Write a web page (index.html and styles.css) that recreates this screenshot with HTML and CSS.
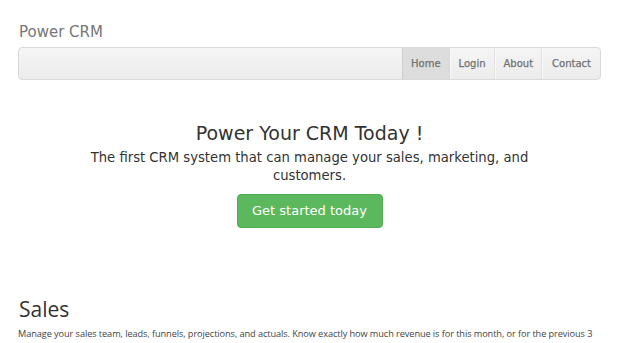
FILE: index.html
```html
<!DOCTYPE html>
<html>
<head>
<meta charset="utf-8">
<link rel="stylesheet" href="styles.css">
</head>
<body>
<div class="container">
  <header class="masthead">
    <div class="brand">Power CRM</div>
    <nav class="navbar">
      <ul class="nav">
        <li class="active"><a href="#">Home</a></li>
        <li><a href="#">Login</a></li>
        <li><a href="#">About</a></li>
        <li><a href="#">Contact</a></li>
      </ul>
    </nav>
  </header>
  <section class="hero">
    <h1>Power Your CRM Today !</h1>
    <p class="lead">The first CRM system that can manage your sales, marketing, and customers.</p>
    <a class="btn" href="#">Get started today</a>
  </section>
  <section class="feature">
    <h2>Sales</h2>
    <p>Manage your sales team, leads, funnels, projections, and actuals. Know exactly how much revenue is for this month, or for the previous 3 years.</p>
  </section>
</div>
</body>
</html>
```
FILE: styles.css
```css
* { box-sizing: border-box; }
html, body { margin: 0; padding: 0; background: #fff; }
body { font-family: "DejaVu Sans", sans-serif; color: #333; }
.container { padding: 0 19px 0 18px; width: 620px; }
.masthead { padding-top: 22px; }
.brand { font-size: 15px; color: #777; line-height: 20px; height: 25px; padding-left: 1px; }
.navbar {
  height: 33px;
  border: 1px solid #d9d9d9;
  border-radius: 4px;
  background: linear-gradient(#f5f5f5, #ececec);
  display: flex;
  justify-content: flex-end;
  overflow: hidden;
}
.nav { list-style: none; margin: 0; padding: 0; display: flex; }
.nav li { display: flex; }
.nav a {
  display: block;
  text-decoration: none;
  color: #6e6e6e;
  font-size: 10px;
  line-height: 31px;
  padding: 0 8px;
  border-left: 1px solid #fafafa;
  border-right: 1px solid #e0e0e0;
  -webkit-text-stroke: 0.25px #777;
}
.nav li:last-child a { border-right: 0; padding: 0 9px 0 9px; }
.nav li.active a { background: #dddddd; border-left: 1px solid #cfcfcf; border-right-color: #d6d6d6; }
.hero { text-align: center; padding-top: 40px; }
.hero h1 { font-size: 19px; font-weight: normal; margin: 0; line-height: 26px; }
.lead { font-size: 13.2px; line-height: 18px; margin: 3px auto 0; max-width: 460px; }
.btn {
  display: inline-block;
  margin-top: 9px;
  background: #5cb85c;
  border: 1px solid #4cae4c;
  color: #fff;
  font-size: 13px;
  text-decoration: none;
  white-space: nowrap;
  text-align: center;
  height: 34px;
  line-height: 32px;
  border-radius: 4px;
  width: 146px;
}
.feature { padding-top: 67px; }
.feature h2 { font-family: "Open Sans", sans-serif; font-size: 21px; font-weight: normal; margin: 0; line-height: 28px; padding-left: 1px; color: #333; }
.feature p { font-family: "Open Sans", sans-serif; font-size: 9.2px; letter-spacing: -0.08px; margin: 4px -4px 0 0; line-height: 14px; color: #444; }
```
